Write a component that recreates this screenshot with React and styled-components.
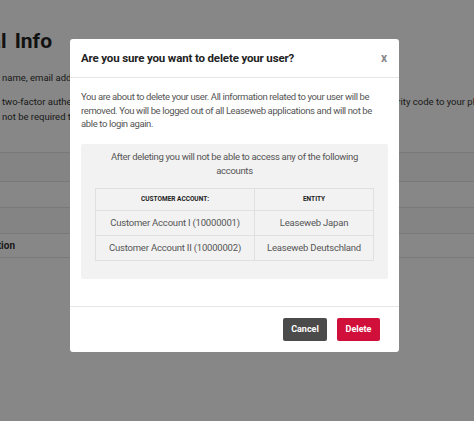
import React from 'react'
import styled, { createGlobalStyle } from 'styled-components'

const GlobalStyle = createGlobalStyle`
  html, body {
    margin: 0;
    padding: 0;
    background: #fff;
    font-family: Roboto, "Liberation Sans", sans-serif;
  }
`

const Page = styled.div`
  width: 474px;
  height: 421px;
  overflow: hidden;
  position: relative;
  background: #fff;
`

const PageContent = styled.div`
  padding: 28px 0 0 2px;
  width: 700px;
`

const PageTitle = styled.h1`
  margin: 0 0 0 -110px;
  width: 160px;
  text-align: right;
  white-space: nowrap;
  font-size: 21px;
  font-weight: 700;
  word-spacing: 3px;
  color: #222;
  line-height: 26px;
`

const PageText = styled.p`
  margin: ${props => props.top || 0}px 0 0;
  font-size: 9.5px;
  line-height: 15px;
  color: #333;
  white-space: nowrap;
`

const InfoTable = styled.div`
  margin: 28px 0 0 -2px;
  width: 700px;
`

const InfoRow = styled.div`
  height: ${props => props.h}px;
  border-top: 1px solid #e4e4e4;
  background: ${props => (props.light ? '#fafafa' : '#fff')};
  display: flex;
  align-items: center;
  &:last-child {
    border-bottom: 1px solid #e4e4e4;
  }
`

const RowLabel = styled.span`
  margin-left: -146px;
  width: 161px;
  text-align: right;
  white-space: nowrap;
  font-size: 10px;
  font-weight: 700;
  color: #333;
`

const Overlay = styled.div`
  position: absolute;
  inset: 0;
  background: rgba(0, 0, 0, 0.47);
`

const Modal = styled.div`
  position: absolute;
  left: 70px;
  top: 39px;
  width: 329px;
  background: #fff;
  border-radius: 3px;
  color: #555;
`

const Header = styled.div`
  height: 38px;
  padding: 0 12px 0 11px;
  display: flex;
  align-items: center;
  justify-content: space-between;
  border-bottom: 1px solid #e5e5e5;
`

const Title = styled.h2`
  margin: 0;
  font-size: 11.5px;
  font-weight: 700;
  letter-spacing: -0.15px;
  color: #222;
`

const Close = styled.span`
  font-size: 12px;
  font-weight: 700;
  color: #888;
`

const Body = styled.div`
  padding: 12px 11px 27px;
`

const Intro = styled.p`
  margin: 0;
  font-size: 9.5px;
  letter-spacing: -0.38px;
  line-height: 13.5px;
`

const AccountsBox = styled.div`
  margin-top: 13px;
  background: #f2f2f2;
  border-radius: 2px;
  padding: 6px 14px 18px;
`

const BoxText = styled.p`
  margin: 0 0 10px;
  padding: 0 14px;
  text-align: center;
  font-size: 9.5px;
  letter-spacing: -0.32px;
  line-height: 14px;
`

const Table = styled.table`
  width: 100%;
  border-collapse: collapse;
  font-size: 9.5px;
  letter-spacing: -0.2px;
  color: #555;
`

const Th = styled.th`
  height: 21px;
  padding: 0;
  border: 1px solid #e0e0e0;
  font-size: 6.5px;
  font-weight: 700;
  letter-spacing: 0;
  color: #222;
  text-transform: uppercase;
  width: ${props => props.w || 'auto'};
`

const Td = styled.td`
  height: 24px;
  padding: 0;
  border: 1px solid #e0e0e0;
  text-align: center;
`

const Footer = styled.div`
  height: 45px;
  border-top: 1px solid #e5e5e5;
  display: flex;
  align-items: center;
  justify-content: flex-end;
  gap: 10px;
  padding-right: 19px;
`

const Button = styled.button`
  height: 23px;
  width: ${props => props.w}px;
  padding: 0;
  border: none;
  border-radius: 2px;
  font-family: inherit;
  font-size: 9px;
  font-weight: 700;
  color: #fff;
  background: ${props => (props.danger ? '#d0103a' : '#4b4b4b')};
`

export default function App() {
  return (
    <Page>
      <GlobalStyle />
      <PageContent>
        <PageTitle>Personal Info</PageTitle>
        <PageText top={16}>name, email address and password of your Leaseweb user.</PageText>
        <PageText top={9}>two-factor authentication adds an extra layer of protection to the account. We will send a security code to your phone,</PageText>
        <PageText>not be required to enter it again on this device.</PageText>
        <InfoTable>
          <InfoRow h={28} light />
          <InfoRow h={25} />
          <InfoRow h={25} light />
          <InfoRow h={23}>
            <RowLabel>Two-factor authentication</RowLabel>
          </InfoRow>
        </InfoTable>
      </PageContent>
      <Overlay />
      <Modal>
        <Header>
          <Title>Are you sure you want to delete your user?</Title>
          <Close>x</Close>
        </Header>
        <Body>
          <Intro>
            You are about to delete your user. All information related to your user will be removed. You will be logged out of all Leaseweb applications and will not be able to login again.
          </Intro>
          <AccountsBox>
            <BoxText>After deleting you will not be able to access any of the following accounts</BoxText>
            <Table>
              <thead>
                <tr>
                  <Th w="158px">Customer Account:</Th>
                  <Th>Entity</Th>
                </tr>
              </thead>
              <tbody>
                <tr>
                  <Td>Customer Account I (10000001)</Td>
                  <Td>Leaseweb Japan</Td>
                </tr>
                <tr>
                  <Td>Customer Account II (10000002)</Td>
                  <Td>Leaseweb Deutschland</Td>
                </tr>
              </tbody>
            </Table>
          </AccountsBox>
        </Body>
        <Footer>
          <Button w={44}>Cancel</Button>
          <Button w={43} danger>Delete</Button>
        </Footer>
      </Modal>
    </Page>
  )
}
